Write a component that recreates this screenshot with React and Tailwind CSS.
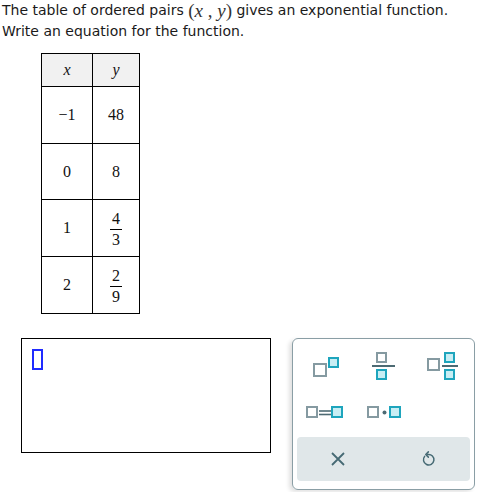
import React from "react";

const GRAY = "#859aa1";
const TEAL = "#1ea5bd";
const TFILL = "#c8eef4";

function Sq({ x, y, s, teal }) {
  return (
    <rect
      x={x}
      y={y}
      width={s}
      height={s}
      fill={teal ? TFILL : "#fff"}
      stroke={teal ? TEAL : GRAY}
      strokeWidth="2"
    />
  );
}

function SuperIcon() {
  return (
    <svg width="28" height="22" viewBox="0 0 28 22">
      <Sq x={2} y={8} s={12} />
      <Sq x={17} y={2} s={9} teal />
    </svg>
  );
}

function FracIcon() {
  return (
    <svg width="24" height="29" viewBox="0 0 24 29">
      <Sq x={5} y={1} s={9} />
      <line x1="0" y1="14" x2="23" y2="14" stroke="#4d6a73" strokeWidth="2" />
      <Sq x={5} y={18} s={9} teal />
    </svg>
  );
}

function MixedIcon() {
  return (
    <svg width="32" height="29" viewBox="0 0 32 29">
      <Sq x={1} y={7} s={11} />
      <line x1="15" y1="14" x2="31" y2="14" stroke="#4d6a73" strokeWidth="2" />
      <Sq x={18} y={1} s={9} teal />
      <Sq x={18} y={18} s={9} teal />
    </svg>
  );
}

function EqIcon() {
  return (
    <svg width="38" height="13" viewBox="0 0 38 13">
      <Sq x={1} y={1} s={10} />
      <line x1="13" y1="5" x2="25" y2="5" stroke="#4d6a73" strokeWidth="1.6" />
      <line x1="13" y1="8.5" x2="25" y2="8.5" stroke="#4d6a73" strokeWidth="1.6" />
      <Sq x={26} y={1} s={10} teal />
    </svg>
  );
}

function DotIcon() {
  return (
    <svg width="36" height="13" viewBox="0 0 36 13">
      <Sq x={1} y={1} s={10} />
      <circle cx="17.5" cy="6.5" r="2" fill="#4d6a73" />
      <Sq x={23} y={1} s={10} teal />
    </svg>
  );
}

function Frac({ n, d }) {
  return (
    <div className="inline-flex flex-col items-center leading-[18px]">
      <span>{n}</span>
      <span className="block w-[12px] h-[1px] bg-black my-[1px]" />
      <span>{d}</span>
    </div>
  );
}

export default function App() {
  const rows = [
    ["\u22121", "48", 57],
    ["0", "8", 56],
    ["1", <Frac n="4" d="3" />, 57],
    ["2", <Frac n="2" d="9" />, 57],
  ];
  const math = "inline-block align-top h-[21px] font-['Liberation_Serif',serif] italic text-[19px] leading-[21px] text-[#333]";

  return (
    <div className="w-[500px] h-[492px] bg-white overflow-hidden text-[#222]">
      <div className="pl-[2px] font-['DejaVu_Sans','Verdana',sans-serif] text-[14px] leading-[21px] text-[#1a1a1a]">
        <div>
          The table of ordered pairs{" "}
          <span className={math}>
            <span className="not-italic">(</span>x<span className="not-italic"> , </span>y<span className="not-italic">)</span>
          </span>{" "}
          gives an exponential function.
        </div>
        <div>Write an equation for the function.</div>
      </div>

      <table className="ml-[41px] mt-[11px] border-collapse font-['Liberation_Serif',serif] text-[16px] text-[#111]">
        <thead>
          <tr className="h-[33px] bg-[#f1f1f1]">
            <th className="w-[51px] border border-black font-normal italic">x</th>
            <th className="w-[47px] border border-black font-normal italic">y</th>
          </tr>
        </thead>
        <tbody>
          {rows.map(([a, b, h], i) => (
            <tr key={i} style={{ height: h }}>
              <td className="border border-black text-center align-middle">{a}</td>
              <td className="border border-black text-center align-middle">{b}</td>
            </tr>
          ))}
        </tbody>
      </table>

      <div className="flex items-start mt-[24px]">
        <div className="ml-[21px] w-[250px] h-[115px] border border-black pl-[10px] pt-[10px]">
          <div className="w-[11px] h-[21px] border-2 border-[#1f2bff]" />
        </div>

        <div className="ml-[21px] w-[183px] h-[152px] border border-[#8a9ea5] rounded-[6px] shadow-[-3px_2px_4px_rgba(0,0,0,0.12)] flex flex-col">
          <div className="grid grid-cols-[58px_58px_58px] px-[4px] h-[52px] items-center justify-items-center pt-[2px]">
            <div className="pt-[2px]"><SuperIcon /></div>
            <div><FracIcon /></div>
            <div className="pl-[2px]"><MixedIcon /></div>
          </div>
          <div className="grid grid-cols-[58px_58px_58px] px-[4px] h-[46px] items-center justify-items-center pb-[4px]">
            <div className="pr-[2px]"><EqIcon /></div>
            <div className="pl-[1px]"><DotIcon /></div>
          </div>
          <div className="mx-[4px] h-[44px] rounded-[4px] bg-[#e0e7e9] grid grid-cols-2 items-center justify-items-center">
            <svg width="16" height="16" viewBox="0 0 16 16" className="ml-[-4px]">
              <path d="M2 2 L14 14 M14 2 L2 14" stroke="#466a74" strokeWidth="1.8" fill="none" />
            </svg>
            <svg width="18" height="18" viewBox="0 0 24 24" className="mr-[-2px]">
              <path
                d="M7.5 8.5 A7 7 0 1 0 12 6 L11 6"
                stroke="#466a74"
                strokeWidth="2"
                fill="none"
                strokeLinecap="round"
              />
              <path d="M12.5 2.5 L9 6 L12.5 9.5" stroke="#466a74" strokeWidth="2" fill="none" strokeLinecap="round" strokeLinejoin="round" />
            </svg>
          </div>
        </div>
      </div>
    </div>
  );
}
